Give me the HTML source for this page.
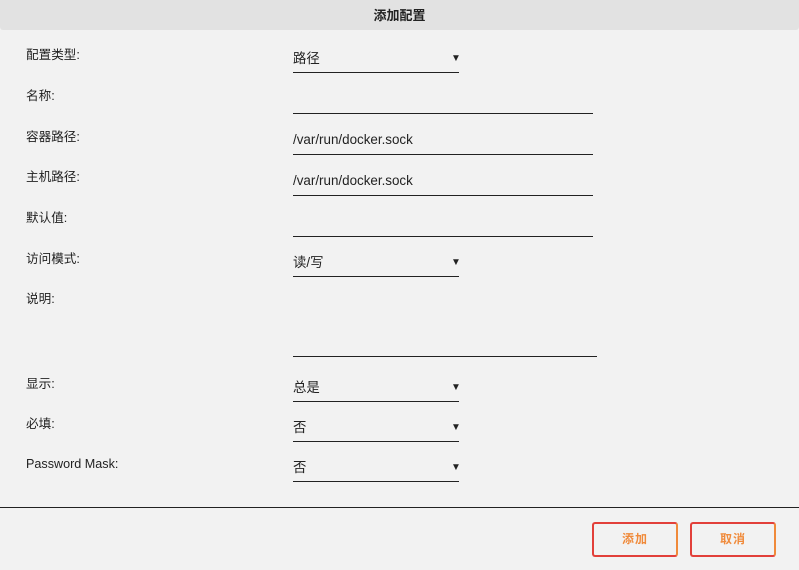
<!DOCTYPE html>
<html><head><meta charset="utf-8"><style>
body{margin:0;width:799px;height:570px;background:#f2f2f2;font-family:"Liberation Sans","Noto Sans CJK SC",sans-serif;font-size:13px;color:#222;position:relative;overflow:hidden}
.hdr{position:absolute;left:0;top:0;width:799px;height:30px;background:#e2e2e2;border-radius:0 0 3px 3px;text-align:center;line-height:32px;font-weight:bold;font-size:13px}
.l{position:absolute;left:26px;line-height:16px;font-size:12.6px;margin-top:1px}
.v{position:absolute;left:293px;line-height:16px;font-size:13.4px;margin-top:1px}
.u{position:absolute;height:1px;background:#222}
.a{position:absolute;left:451px;font-size:10px;line-height:10px}
.b{position:absolute;top:522px;width:82px;height:31px;border:2px solid #e2403a;border-right-color:#f08a3a;border-radius:3px;color:#f08a3a;text-align:center;line-height:31px;font-weight:bold;font-size:12px;letter-spacing:1px;background:#f2f2f2}
</style></head><body>
<div class="hdr">添加配置</div>
<div class="l" style="top:46px">配置类型:</div>
<div class="v" style="top:50px">路径</div><div class="a" style="top:54px">▼</div><div class="u" style="left:293px;top:72px;width:166px"></div>
<div class="l" style="top:87px">名称:</div>
<div class="u" style="left:293px;top:113px;width:300px"></div>
<div class="l" style="top:128px">容器路径:</div>
<div class="v" style="top:131px">/var/run/docker.sock</div><div class="u" style="left:293px;top:154px;width:300px"></div>
<div class="l" style="top:168px">主机路径:</div>
<div class="v" style="top:172px">/var/run/docker.sock</div><div class="u" style="left:293px;top:195px;width:300px"></div>
<div class="l" style="top:209px">默认值:</div>
<div class="u" style="left:293px;top:236px;width:300px"></div>
<div class="l" style="top:250px">访问模式:</div>
<div class="v" style="top:254px">读/写</div><div class="a" style="top:258px">▼</div><div class="u" style="left:293px;top:276px;width:166px"></div>
<div class="l" style="top:290px">说明:</div>
<div class="u" style="left:293px;top:356px;width:304px"></div>
<div class="l" style="top:375px">显示:</div>
<div class="v" style="top:379px">总是</div><div class="a" style="top:383px">▼</div><div class="u" style="left:293px;top:401px;width:166px"></div>
<div class="l" style="top:415px">必填:</div>
<div class="v" style="top:419px">否</div><div class="a" style="top:423px">▼</div><div class="u" style="left:293px;top:441px;width:166px"></div>
<div class="l" style="top:455px">Password Mask:</div>
<div class="v" style="top:459px">否</div><div class="a" style="top:463px">▼</div><div class="u" style="left:293px;top:481px;width:166px"></div>
<div class="u" style="left:0;top:507px;width:799px"></div>
<div class="b" style="left:592px">添加</div>
<div class="b" style="left:690px">取消</div>
</body></html>
